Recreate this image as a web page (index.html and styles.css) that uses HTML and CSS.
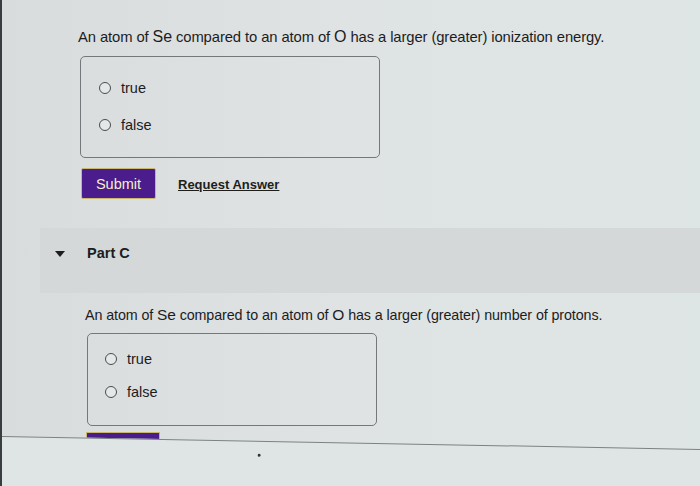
FILE: index.html
```html
<!DOCTYPE html>
<html lang="en">
<head>
  <meta charset="UTF-8">
  <meta name="viewport" content="width=device-width, initial-scale=1.0">
  <link rel="stylesheet" href="styles.css">
  <title>Part B / Part C</title>
</head>
<body>

  <div class="page">
    <section class="part part-b">
      <p class="question">An atom of <span class="el">Se</span> compared to an atom of <span class="el">O</span> has a larger (greater) ionization energy.</p>
      <div class="choices">
        <label class="choice"><span class="radio"></span>true</label>
        <label class="choice"><span class="radio"></span>false</label>
      </div>
      <div class="actions">
        <button class="submit-btn">Submit</button>
        <a href="#" class="request-link">Request Answer</a>
      </div>
    </section>

    <div class="part-header">
      <span class="caret"></span>
      <span class="part-title">Part C</span>
    </div>

    <section class="part part-c">
      <p class="question">An atom of <span class="el">Se</span> compared to an atom of <span class="el">O</span> has a larger (greater) number of protons.</p>
      <div class="choices choices-c">
        <label class="choice"><span class="radio"></span>true</label>
        <label class="choice"><span class="radio"></span>false</label>
      </div>
      <div class="cut-btn"></div>
    </section>

    <div class="footer-area">
      <span class="speck"></span>
    </div>
  </div>

</body>
</html>
```

FILE: styles.css
```css
body {
  font-family: "Liberation Sans", Arial, sans-serif;
  background-color: #dde2e3;
  margin: 0;
  padding: 0;
  color: #1c1c1e;
}

.page {
  height: 486px;
  overflow: hidden;
  border-left: 2px solid #3a3d40;
  background: linear-gradient(90deg, #d9dcdd 0%, #dfe3e3 50%, #dee6e5 100%);
}

.part-b {
  padding: 28px 0 0 76px;
}

.question {
  margin: 0;
  font-size: 14.8px;
  line-height: 18px;
  letter-spacing: -0.1px;
}

.el {
  font-size: 16px;
}

.part-c .question {
  font-size: 14.3px;
}

.part-c .el {
  font-size: 15.5px;
}

.choices {
  width: 280px;
  border: 1px solid #74787a;
  border-radius: 5px;
  box-sizing: content-box;
  display: flex;
  flex-direction: column;
}

.part-b .choices {
  margin: 10px 0 0 2px;
  height: 79px;
  padding: 21px 0 0 18px;
  gap: 17px;
}

.choice {
  display: flex;
  align-items: center;
  gap: 10px;
  font-size: 14.5px;
  height: 20px;
}

.radio {
  width: 10px;
  height: 10px;
  border: 1.5px solid #4a4d50;
  border-radius: 50%;
  background-color: #e4e8e9;
}

.actions {
  display: flex;
  align-items: center;
  gap: 22px;
  margin-top: 10px;
  margin-left: 3px;
}

.submit-btn {
  width: 75px;
  height: 31px;
  background-color: #4a1c8c;
  color: #f6f0c8;
  border: 1px solid #c9b870;
  border-radius: 2px;
  font-family: "Liberation Sans", Arial, sans-serif;
  font-size: 14.5px;
  padding: 0;
}

.request-link {
  color: #1e1e1a;
  font-size: 13px;
  font-weight: bold;
  text-decoration: underline;
  margin-top: 2px;
}

.part-header {
  margin: 29px 0 0 38px;
  height: 48px;
  background-color: #d4d8d9;
  display: flex;
  align-items: flex-start;
  padding: 17px 0 0 15px;
  gap: 22px;
}

.caret {
  width: 0;
  height: 0;
  margin-top: 6px;
  border-left: 5px solid transparent;
  border-right: 5px solid transparent;
  border-top: 6px solid #1d1d20;
}

.part-title {
  font-size: 14.5px;
  font-weight: bold;
  line-height: 17px;
}

.part-c {
  padding: 13px 0 0 83px;
}

.choices-c {
  margin: 9px 0 0 2px;
  width: 271px;
  height: 76px;
  padding: 15px 0 0 17px;
  gap: 13px;
}

.cut-btn {
  margin: 6px 0 0 1px;
  width: 72px;
  height: 6px;
  background-color: #4a1c8c;
  border: 1px solid #c9b870;
  border-bottom: none;
}

.footer-area {
  margin-top: -3px;
  border-top: 1px solid #7c8284;
  width: 720px;
  height: 80px;
  background-color: #dfe4e4;
  position: relative;
  transform: rotate(1.06deg);
  transform-origin: left top;
}

.speck {
  position: absolute;
  left: 256px;
  top: 12px;
  width: 3px;
  height: 3px;
  border-radius: 50%;
  background-color: #333;
}
```
